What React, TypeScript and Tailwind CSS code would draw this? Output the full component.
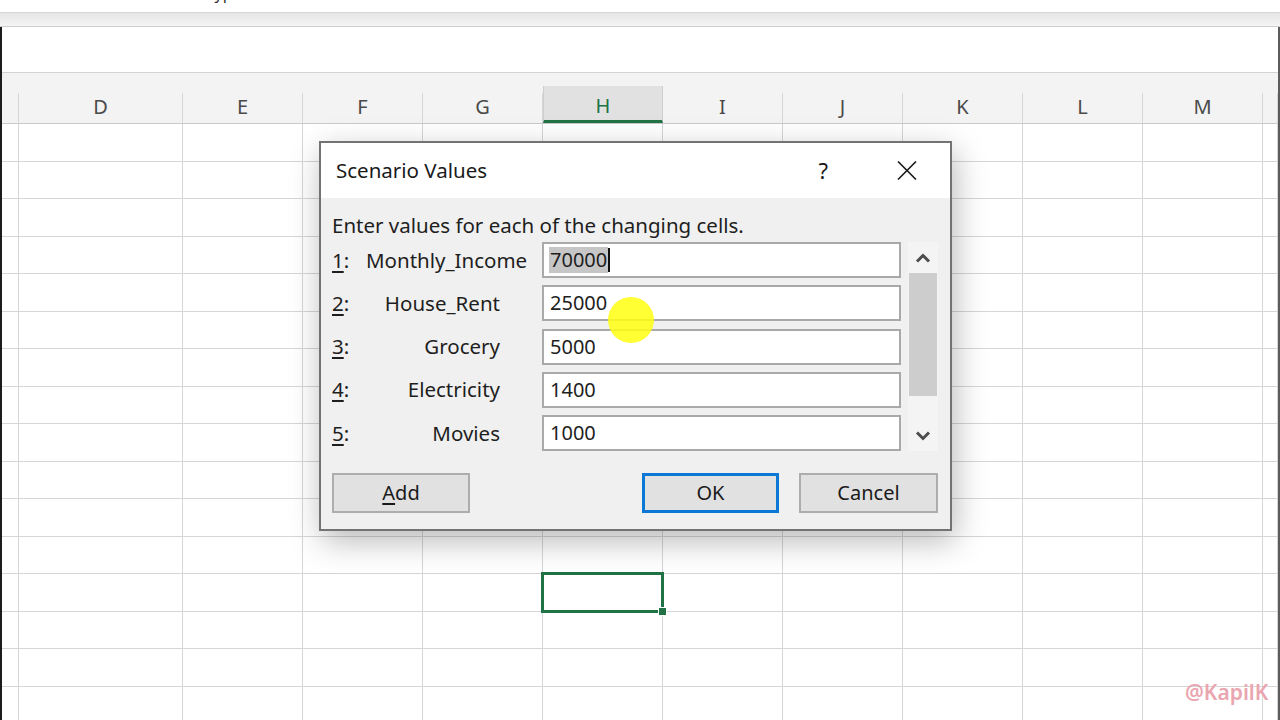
import type { ReactNode } from 'react';

const COLS = [
  { key: 'C', w: 'w-[17px]', label: '' },
  { key: 'D', w: 'w-[164px]', label: 'D' },
  { key: 'E', w: 'w-[120px]', label: 'E' },
  { key: 'F', w: 'w-[120px]', label: 'F' },
  { key: 'G', w: 'w-[120px]', label: 'G' },
  { key: 'H', w: 'w-[120px]', label: 'H' },
  { key: 'I', w: 'w-[120px]', label: 'I' },
  { key: 'J', w: 'w-[120px]', label: 'J' },
  { key: 'K', w: 'w-[120px]', label: 'K' },
  { key: 'L', w: 'w-[120px]', label: 'L' },
  { key: 'M', w: 'w-[120px]', label: 'M' },
  { key: 'N', w: 'w-[15px]', label: '' },
];

const ROW_COUNT = 16;
const ACTIVE_ROW = 12;
const ACTIVE_COL = 'H';

const VALUES = [
  { n: '1', label: 'Monthly_Income', value: '70000', first: true },
  { n: '2', label: 'House_Rent', value: '25000' },
  { n: '3', label: 'Grocery', value: '5000' },
  { n: '4', label: 'Electricity', value: '1400' },
  { n: '5', label: 'Movies', value: '1000' },
];

function Chevron({ up }: { up?: boolean }) {
  return (
    <svg width="16" height="10" viewBox="0 0 16 10" aria-hidden>
      <polyline
        points={up ? '2,8.5 8,2.5 14,8.5' : '2,1.5 8,7.5 14,1.5'}
        fill="none"
        stroke="#4d4d4d"
        strokeWidth="3"
      />
    </svg>
  );
}

function DialogButton({
  children,
  primary = false,
  className = '',
}: {
  children: ReactNode;
  primary?: boolean;
  className?: string;
}) {
  return (
    <button
      type="button"
      className={
        'flex h-[40px] items-center justify-center bg-[#e1e1e1] text-[20px] text-[#1a1a1a] ' +
        (primary ? 'border-[3px] border-[#0a78d4] ' : 'border-2 border-[#adadad] ') +
        className
      }
    >
      {children}
    </button>
  );
}

function ScenarioDialog() {
  return (
    <div className="absolute left-[319px] top-[141px] z-20 flex h-[390px] w-[633px] flex-col border-2 border-[#737373] bg-[#f0f0f0] shadow-[3px_10px_30px_rgba(0,0,0,0.28)]">
      {/* title bar */}
      <div className="flex h-[55px] shrink-0 items-center justify-between bg-white pl-[15px] pr-[33px]">
        <span className="text-[20.5px] text-[#1a1a1a]">Scenario Values</span>
        <div className="flex items-center">
          <span className="text-[22px] text-[#1a1a1a]">?</span>
          <svg className="ml-[69px]" width="20" height="19" viewBox="0 0 20 19" aria-hidden>
            <path d="M1 0.5 L19 18.5 M19 0.5 L1 18.5" stroke="#1a1a1a" strokeWidth="1.6" />
          </svg>
        </div>
      </div>

      {/* body */}
      <div className="flex flex-1 flex-col pb-[16px] pl-[11px] pr-[12px] pt-[14px] text-[#1e1e1e]">
        <p className="text-[20.5px] leading-[26px]">Enter values for each of the changing cells.</p>

        <div className="mt-[4px] flex h-[209px]">
          <div className="flex flex-1 flex-col gap-[7.25px]">
            {VALUES.map((v) => (
              <div key={v.n} className="flex h-[36px] items-center text-[20.5px]">
                <span className="w-[34px] shrink-0">
                  <span className="underline underline-offset-[3px]">{v.n}</span>:
                </span>
                <span
                  className={
                    'flex w-[134px] shrink-0 whitespace-nowrap ' +
                    (v.first ? 'justify-start' : 'justify-end')
                  }
                >
                  {v.label}
                </span>
                <div className="ml-[42px] flex h-[36px] flex-1 items-center border-2 border-[#a9a9a9] bg-white pl-[5px] text-[20px]">
                  {v.first ? (
                    <>
                      <span className="bg-[#c6c6c6] px-[1px] leading-[26px]">{v.value}</span>
                      <span className="h-[24px] w-[1.5px] bg-[#111]" />
                    </>
                  ) : (
                    <span className="pl-[1px]">{v.value}</span>
                  )}
                </div>
              </div>
            ))}
          </div>

          {/* scrollbar */}
          <div className="ml-[7px] flex w-[30px] flex-col bg-[#f4f4f4]">
            <div className="flex h-[31px] items-center justify-center">
              <Chevron up />
            </div>
            <div className="mx-[1px] h-[123px] bg-[#cdcdcd]" />
            <div className="flex-1" />
            <div className="flex h-[30px] items-center justify-center">
              <Chevron />
            </div>
          </div>
        </div>

        <div className="mt-[22px] flex items-center">
          <DialogButton className="w-[138px]">
            <span>
              <span className="underline underline-offset-[3px]">A</span>dd
            </span>
          </DialogButton>
          <div className="flex-1" />
          <DialogButton primary className="w-[137px]">
            OK
          </DialogButton>
          <DialogButton className="ml-[20px] w-[139px]">Cancel</DialogButton>
        </div>
      </div>
    </div>
  );
}

function Sheet() {
  return (
    <div className="flex flex-1 flex-col border-x-2 border-l-[#1c1c1c] border-r-[#5c5c5c]">
      {/* formula bar area */}
      <div className="h-[46px] shrink-0 border-b border-[#d2d2d2] bg-white" />

      {/* column headers */}
      <div className="flex h-[51px] shrink-0 items-end border-b border-[#c9c9c9] bg-[#f3f3f3]">
        {COLS.map((c) =>
          c.key === ACTIVE_COL ? (
            <div
              key={c.key}
              className={`${c.w} flex h-[37px] shrink-0 items-center justify-center border-x border-b-[3px] border-x-[#cfcfcf] border-b-[#217346] bg-[#e1e1e1] pt-[6px] text-[20px] text-[#217346]`}
            >
              {c.label}
            </div>
          ) : (
            <div
              key={c.key}
              className={`${c.w} flex h-[30px] shrink-0 items-center justify-center border-r border-[#d6d6d6] pb-[2px] text-[20px] text-[#4a4a4a]`}
            >
              {c.label}
            </div>
          ),
        )}
      </div>

      {/* cells */}
      <div className="flex flex-col">
        {Array.from({ length: ROW_COUNT }, (_, r) => (
          <div key={r} className="flex h-[37.5px] shrink-0">
            {COLS.map((c) => (
              <div
                key={c.key}
                className={`${c.w} relative shrink-0 border-b border-r border-[#d6d6d6] bg-white`}
              >
                {r === ACTIVE_ROW && c.key === ACTIVE_COL && (
                  <div className="absolute -bottom-[2px] -left-[2px] -right-[2px] -top-[2px] z-10 border-[3px] border-[#217346]">
                    <div className="absolute -bottom-[6px] -right-[6px] h-[9px] w-[9px] border border-white bg-[#217346]" />
                  </div>
                )}
              </div>
            ))}
          </div>
        ))}
      </div>
    </div>
  );
}

export default function App() {
  return (
    <div className="relative flex h-[720px] w-[1280px] flex-col overflow-hidden bg-white font-['Noto_Sans',sans-serif]">
      {/* clipped ribbon text: only the descenders show */}
      <div className="h-[12px] shrink-0 overflow-hidden bg-white pl-[206px]">
        <span className="-mt-[17px] block text-[16px] leading-[20px] text-[#333]">Type</span>
      </div>
      {/* ribbon bottom edge */}
      <div className="h-[15px] shrink-0 border-y border-t-[#d6d6d6] border-b-[#cfcfcf] bg-linear-to-b from-[#e6e6e6] to-[#f4f4f4]" />

      <Sheet />

      <ScenarioDialog />

      {/* presenter cursor highlight */}
      <div className="absolute left-[608px] top-[297px] z-30 h-[46px] w-[46px] rounded-full bg-[#ffff10]/85" />

      {/* watermark */}
      <span className="absolute left-[1185px] top-[677px] z-30 text-[21px] font-semibold text-[#eaa6b0]">
        @KapilK
      </span>
    </div>
  );
}
